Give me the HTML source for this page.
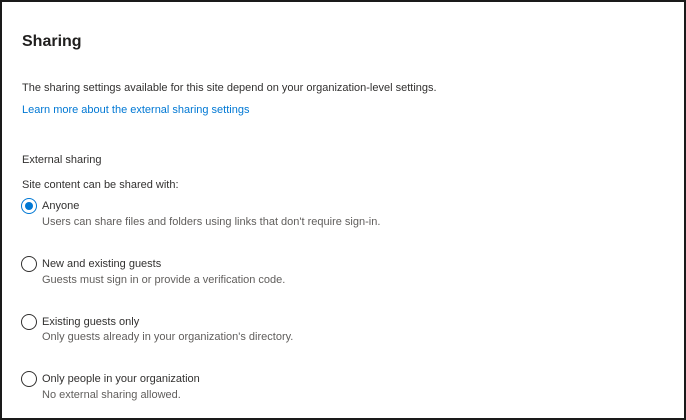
<!DOCTYPE html>
<html><head><meta charset="utf-8"><style>
*{margin:0;padding:0;box-sizing:border-box}
body{width:686px;height:420px;background:#fff;font-family:"Liberation Sans",sans-serif;overflow:hidden}
.frame{position:absolute;left:0;top:0;width:686px;height:420px;border:2px solid #1a1a1a}
.t{position:absolute;white-space:nowrap;font-size:11px;color:#323130;line-height:14px}
.g{color:#605e5c}
.r{position:absolute;left:21px;width:16px;height:16px;border:1px solid #323130;border-radius:50%}
.r.on{border-color:#0078d4}
.r.on::after{content:"";position:absolute;left:3px;top:3px;width:8px;height:8px;border-radius:50%;background:#0078d4}
</style></head><body>
<div class="frame"></div>
<div class="t" style="left:22px;top:32px;font-size:16px;font-weight:bold;line-height:20px;color:#201f1e">Sharing</div>
<div class="t" style="left:22px;top:81px">The sharing settings available for this site depend on your organization-level settings.</div>
<div class="t" style="left:22px;top:103px;color:#0078d4">Learn more about the external sharing settings</div>
<div class="t" style="left:22px;top:153px">External sharing</div>
<div class="t" style="left:22px;top:178px">Site content can be shared with:</div>
<div class="r on" style="top:198px"></div>
<div class="t" style="left:42px;top:199px">Anyone</div>
<div class="t g" style="left:42px;top:215px">Users can share files and folders using links that don't require sign-in.</div>
<div class="r" style="top:256px"></div>
<div class="t" style="left:42px;top:257px">New and existing guests</div>
<div class="t g" style="left:42px;top:273px">Guests must sign in or provide a verification code.</div>
<div class="r" style="top:314px"></div>
<div class="t" style="left:42px;top:315px">Existing guests only</div>
<div class="t g" style="left:42px;top:330px">Only guests already in your organization's directory.</div>
<div class="r" style="top:371px"></div>
<div class="t" style="left:42px;top:372px">Only people in your organization</div>
<div class="t g" style="left:42px;top:388px">No external sharing allowed.</div>
</body></html>
